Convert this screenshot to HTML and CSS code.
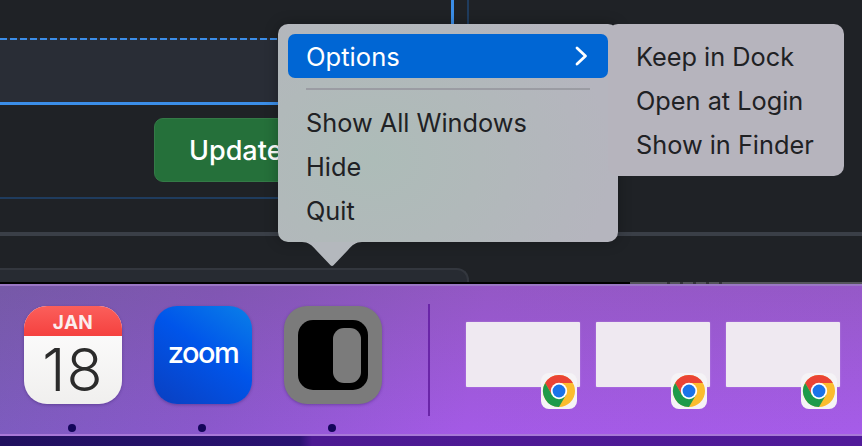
FILE: index.html
```html
<!DOCTYPE html>
<html lang="en">
<head>
<meta charset="utf-8">
<title>Dock menu</title>
<link rel="stylesheet" href="styles.css">
</head>
<body>
<div class="screen">
  <main class="app">
    <section class="editor">
      <div class="editor-pane">
        <div class="selection"></div>
      </div>
      <button class="update">Update</button>
    </section>
    <div class="rule"></div>
    <div class="input-box"></div>
    <div class="app-edge">
      <span class="edge-black"></span>
      <span class="edge-grey"><i></i><i></i><i></i><i></i><i></i></span>
    </div>
    <div class="menu">
      <div class="item active"><span>Options</span>
        <svg class="chevron" viewBox="0 0 13 20" width="13" height="20"><path d="M2 2l8.5 8-8.5 8" fill="none" stroke="#fff" stroke-width="2.8" stroke-linecap="round" stroke-linejoin="round"/></svg>
      </div>
      <div class="separator"></div>
      <div class="item">Show All Windows</div>
      <div class="item">Hide</div>
      <div class="item">Quit</div>
      <svg class="tail" viewBox="0 0 60 25" width="60" height="25"><path d="M0 0C6 0 10 3 14 8L28.5 23.2Q30 24.6 31.5 23.2L46 8C50 3 54 0 60 0Z" fill="#b4b8bd"/></svg>
    </div>
    <div class="submenu">
      <div class="item">Keep in Dock</div>
      <div class="item">Open at Login</div>
      <div class="item">Show in Finder</div>
    </div>
  </main>
  <footer class="dock">
    <div class="apps">
      <div class="slot">
        <div class="icon calendar"><div class="cal-month">JAN</div><div class="cal-day">18</div></div>
        <span class="dot"></span>
      </div>
      <div class="slot">
        <div class="icon zoom"><span>zoom</span></div>
        <span class="dot"></span>
      </div>
      <div class="slot">
        <div class="icon split"><div class="split-inner"><div class="split-pill"></div></div></div>
        <span class="dot"></span>
      </div>
    </div>
    <div class="divider"></div>
    <div class="windows">
      <div class="thumb">
        <svg class="badge" viewBox="0 0 36 36" width="36" height="36"><use href="#chrome"/></svg>
      </div>
      <div class="thumb">
        <svg class="badge" viewBox="0 0 36 36" width="36" height="36"><use href="#chrome"/></svg>
      </div>
      <div class="thumb">
        <svg class="badge" viewBox="0 0 36 36" width="36" height="36"><use href="#chrome"/></svg>
      </div>
    </div>
  </footer>
  <div class="strip"></div>
</div>
<svg class="defs" width="0" height="0">
  <defs>
    <g id="chrome">
      <rect width="36" height="36" rx="8" fill="#f5f3f6"/>
      <circle cx="18" cy="18" r="16" fill="#fbbc2e"/>
      <path d="M18 18L18 10L31.86 10A16 16 0 0 0 4.14 10L11.07 22Z" fill="#ea4335"/>
      <path d="M18 18L11.07 22L4.14 10A16 16 0 0 0 18 34L24.93 22Z" fill="#1e9a4b"/>
      <circle cx="18" cy="18" r="8.2" fill="#fff"/>
      <circle cx="18" cy="18" r="6.4" fill="#1a73e8"/>
    </g>
  </defs>
</svg>
</body>
</html>
```
FILE: styles.css
```css
* { box-sizing: border-box; }
html, body { margin: 0; padding: 0; }
body { font-family: Inter, "Liberation Sans", sans-serif; background: #1f2226; }
.screen { width: 862px; height: 446px; display: flex; flex-direction: column; overflow: hidden; }
.defs { position: absolute; }

.app { position: relative; height: 284px; background: #1f2226; flex: none; }
.editor { width: 469px; height: 199px; border-right: 2px solid #1f3c5e; border-bottom: 2px solid #1f3c5e; }
.editor-pane { width: 454px; height: 105px; padding-top: 38px; border-right: 3px solid #3b8ee8; border-bottom: 3px solid #3b8ee8; }
.selection { height: 64px; background: repeating-linear-gradient(90deg, #3b8ee8 0 7px, transparent 7px 10px) top left / 100% 2px no-repeat, #292d36; }
.update { display: block; width: 190px; height: 64px; margin: 13px 0 0 154px; padding: 0 0 0 34px; text-align: left; font: 500 27px Inter, "Liberation Sans", sans-serif; color: #fff; background: #25703a; border: 1px solid #347a47; border-radius: 9px; }
.rule { height: 4px; margin-top: 33px; background: #3a3f47; }
.input-box { width: 469px; height: 14px; margin-top: 32px; background: #272b32; border: solid #33373e; border-width: 2px 2px 0 0; border-top-right-radius: 12px; }
.app-edge { display: flex; height: 2px; }
.edge-black { width: 630px; background: #000; }
.edge-grey { flex: 1; display: flex; gap: 10px; padding-left: 37px; background: #55555c; }
.edge-grey i { width: 3px; background: #333338; }

.menu, .submenu { position: absolute; border-radius: 10px; color: #202124; font-size: 25.3px; }
.menu { left: 278px; top: 24px; width: 340px; height: 218px; padding: 10px; background: radial-gradient(ellipse 70% 90% at 28% 62%, #adbcb8 0%, #b1b9ba 45%, #b5b5be 100%), #b5b5be; box-shadow: 0 0 14px rgba(0,0,0,.28); }
.submenu { left: 608px; top: 24px; width: 236px; height: 152px; padding: 11px 0 0 28px; background: #b6b4bd; }
.item { height: 44px; line-height: 44px; padding-left: 18px; }
.menu .item { line-height: 46px; }
.submenu .item { padding-left: 0; }
.menu .active { display: flex; align-items: center; justify-content: space-between; padding-right: 20px; background: #0066d4; color: #fff; border-radius: 7px; font-size: 25.6px; }
.active span { margin-top: 2px; }
.separator { height: 2px; margin: 10px 18px 10px 18px; background: #9b9ca3; }
.tail { position: absolute; left: 24px; top: 218px; }

.dock { flex: none; height: 152px; display: flex; padding-left: 24px; background: linear-gradient(180deg, rgba(100,80,100,.25), rgba(100,80,100,0) 100%), linear-gradient(100deg, #7c5cbe 0%, #8a58cc 25%, #a45ae6 55%, #a65ce9 100%); border-top: 2px solid #9a77c4; border-bottom: 2px solid #a878d8; }
.apps { display: flex; gap: 32px; padding-top: 20px; }
.slot { display: flex; flex-direction: column; align-items: center; width: 98px; }
.icon { width: 98px; height: 98px; border-radius: 23px; overflow: hidden; flex: none; box-shadow: 0 1px 3px rgba(40,20,80,.35); }
.dot { width: 8px; height: 8px; margin: 20px 2px 0 0; border-radius: 50%; background: #14065a; }

.calendar { background: linear-gradient(#ffffff, #f0efee); text-align: center; }
.cal-month { height: 30px; padding-top: 1px; line-height: 31px; background: linear-gradient(#fb5f5b, #f5413f); color: #fbeeee; font-size: 19px; font-weight: 700; letter-spacing: .3px; }
.cal-day { font-size: 59px; line-height: 67px; font-weight: 300; color: #2b2b2b; letter-spacing: 1px; }

.zoom { display: flex; align-items: center; justify-content: center; background: linear-gradient(35deg, #0a3fc0 0%, #0055ea 55%, #0a80e8 100%); }
.zoom span { color: #fff; font-size: 29px; font-weight: 500; letter-spacing: -1.5px; line-height: 1; margin-top: -6px; }

.split { display: flex; align-items: center; justify-content: center; background: #7b7b7b; }
.split-inner { width: 70px; height: 70px; border-radius: 15px; background: #000; display: flex; align-items: center; justify-content: flex-end; padding-right: 7px; }
.split-pill { width: 28px; height: 55px; border-radius: 11px; background: #7b7b7b; }

.divider { width: 2px; height: 112px; margin: 18px 0 0 46px; background: #6a25a8; }
.windows { display: flex; gap: 16px; padding: 36px 0 0 36px; }
.thumb { position: relative; width: 114px; height: 65px; background: #efe9f1; border-radius: 1px; box-shadow: 0 0 2px rgba(255,255,255,.3); }
.badge { position: absolute; left: 75px; top: 51px; }

.strip { flex: 1; background: linear-gradient(90deg, #20105e 0, #2a1272 300px, #4c1992 312px, #511a9a 100%); }
```
